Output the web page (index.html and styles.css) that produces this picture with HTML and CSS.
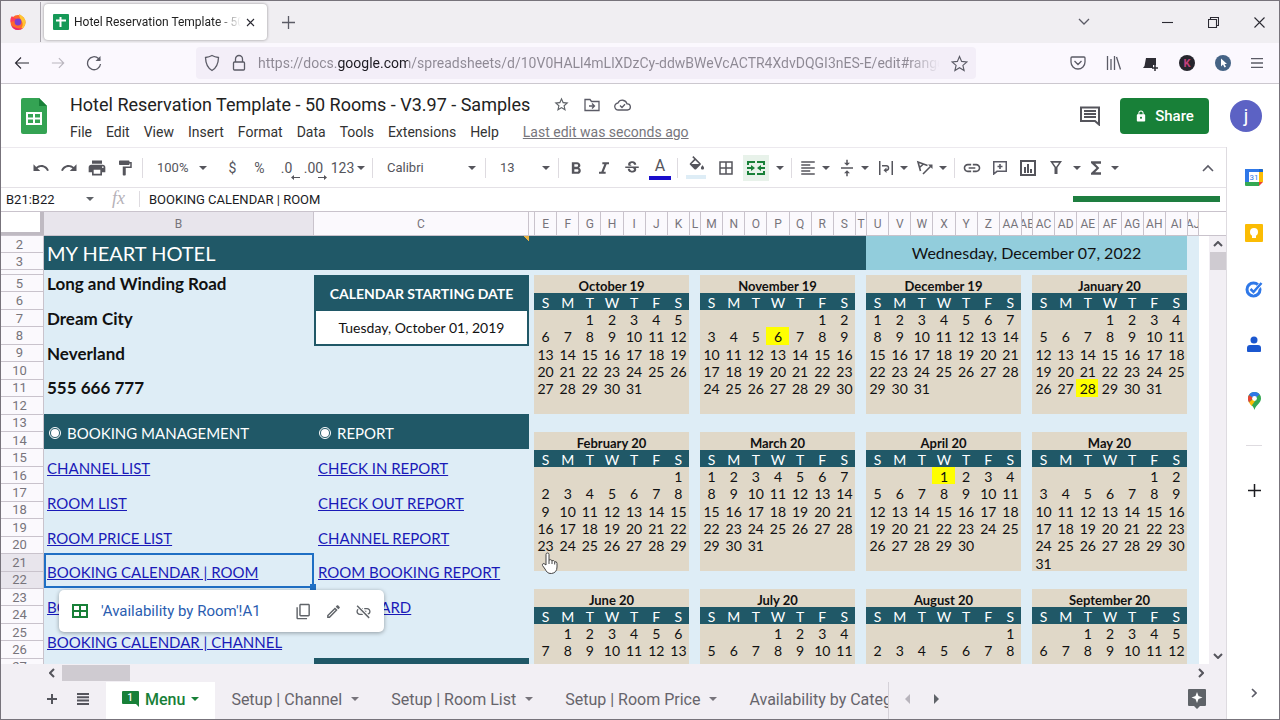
FILE: index.html
```html
<!DOCTYPE html>
<html lang="en">
<head>
    <meta charset="UTF-8">
    <title>Hotel Reservation Template - 50 Rooms - V3.97 - Samples</title>
    <link rel="stylesheet" href="styles.css">
</head>
<body>
<div class="tabstrip">
    <div class="pinned">
        <svg width="18" height="18" viewBox="0 0 18 18">
            <circle cx="9" cy="9.500" r="7.500" fill="#ff6a2b"/>
            <path d="M10 1c4 2 7 5 6.500 9-.5 4-3.500 7-7.500 7 4-1 5-4 4.500-7S10 5 10 1z" fill="#ffc533"/>
            <path d="M1.500 9C1 6 2 4 3 3c1 1.500 2 2 4 2L6 8z" fill="#ff3d5a"/>
            <path d="M2 12c1 3 4 5 7 5 2 0 4-1 5-2-4 1-9 0-12-3z" fill="#e8276f"/>
            <circle cx="9" cy="9" r="3.400" fill="#7a3fd0"/>
        </svg>
    </div>
    <div class="browser-tab">
        <svg width="16" height="16" viewBox="0 0 16 16">
            <rect width="16" height="16" rx="1" fill="#159957"/>
            <path d="M6.500 3h2v10h-2zM3 5.500h10v2H3z" fill="#fff"/>
        </svg>
        <span class="browser-tab-title">Hotel Reservation Template - 50 Rooms</span>
        <button class="plain" aria-label="Close tab">
            <svg width="9" height="9" viewBox="0 0 9 9" class="line dark"><path d="M1 1l7 7M8 1L1 8"/></svg>
        </button>
    </div>
    <button class="plain new-tab" aria-label="New tab">
        <svg width="13" height="13" viewBox="0 0 13 13" class="line"><path d="M6.500 0v13M0 6.500h13"/></svg>
    </button>
    <div class="window-buttons">
        <button class="plain all-tabs" aria-label="List all tabs">
            <svg width="12" height="8" viewBox="0 0 12 8" class="line"><path d="M1 1l5 5 5-5"/></svg>
        </button>
        <button class="plain" aria-label="Minimize">
            <svg width="11" height="11" viewBox="0 0 11 11" class="line dark"><path d="M0 5.500h11"/></svg>
        </button>
        <button class="plain" aria-label="Restore">
            <svg width="11" height="11" viewBox="0 0 11 11" class="line dark"><path d="M.5 2.500h8v8h-8zM2.500 2.500v-2h8v8h-2"/></svg>
        </button>
        <button class="plain" aria-label="Close">
            <svg width="11" height="11" viewBox="0 0 11 11" class="line dark"><path d="M.5.5l10 10M10.500.5l-10 10"/></svg>
        </button>
    </div>
</div>

<nav class="navbar">
    <div class="nav-buttons">
        <button class="plain" aria-label="Back">
            <svg width="16" height="16" viewBox="0 0 16 16" class="line dark"><path d="M15 8H1.500M7 2.500L1.500 8 7 13.500"/></svg>
        </button>
        <button class="plain" aria-label="Forward" disabled>
            <svg width="14" height="14" viewBox="0 0 16 16" class="line faint"><path d="M1 8h13.500M9 2.500L14.500 8 9 13.500"/></svg>
        </button>
        <button class="plain" aria-label="Reload">
            <svg width="16" height="16" viewBox="0 0 16 16" class="line"><path d="M14.500 9A6.500 6.500 0 1 1 12.500 3.500L14 5"/><path d="M14.500 1v5h-5z" fill="#5b5b66" stroke="none"/></svg>
        </button>
    </div>
    <div class="urlbar">
        <svg width="16" height="18" viewBox="0 0 16 18" class="line"><path d="M8 1.500c2.500 1.500 4.500 1.800 6.500 2-.2 6-2 10.500-6.500 13-4.500-2.500-6.300-7-6.500-13 2-.2 4-.5 6.500-2z"/></svg>
        <svg width="14" height="18" viewBox="0 0 14 18" class="line"><rect x="1.500" y="8" width="11" height="8" rx="1"/><path d="M3.500 8V5a3.500 3.500 0 0 1 7 0v3"/></svg>
        <input class="url" type="text" aria-label="Address" spellcheck="false"
               value="https://docs.google.com/spreadsheets/d/10V0HALl4mLlXDzCy-ddwBWeVcACTR4XdvDQGI3nES-E/edit#rangeid=1">
        <button class="plain" aria-label="Bookmark this page">
            <svg width="17" height="17" viewBox="0 0 24 24" class="line thick"><path d="M12 2l3 7 7.500.700-5.700 5 1.700 7.300L12 18l-6.500 4 1.700-7.300-5.700-5L9 9z"/></svg>
        </button>
    </div>
    <div class="extensions">
        <button class="plain" aria-label="Save to Pocket">
            <svg width="16" height="14" viewBox="0 0 16 14" class="line"><path d="M2 1h12q1 0 1 1v4a7 7 0 0 1-14 0V2q0-1 1-1zM4.500 5L8 8.500 11.500 5"/></svg>
        </button>
        <button class="plain" aria-label="Library">
            <svg width="16" height="14" viewBox="0 0 16 14" class="line"><path d="M1.500 0v14M5 3v11M8.500 0v14M10.500 1l4 12.500"/></svg>
        </button>
        <button class="plain" aria-label="Add folder">
            <svg width="17" height="15" viewBox="0 0 17 15"><path d="M4 2h10v7h-3v3H1l1.500-2z" fill="#2e2d35"/><path d="M13 9v6M10 12h6" stroke="#2e2d35" stroke-width="1.500"/></svg>
        </button>
        <button class="plain" aria-label="K extension">
            <svg width="16" height="16" viewBox="0 0 16 16"><circle cx="8" cy="8" r="8" fill="#26252d"/><text x="8" y="12" text-anchor="middle" class="ext-letter">K</text></svg>
        </button>
        <button class="plain" aria-label="Pointer extension">
            <svg width="16" height="16" viewBox="0 0 16 16"><circle cx="8" cy="8" r="8" fill="#456385"/><path d="M6 3.500v8l2-2 1.500 3 1.500-.7-1.500-2.800H12z" fill="#fff"/></svg>
        </button>
        <button class="plain" aria-label="Menu">
            <svg width="12" height="10" viewBox="0 0 12 10" class="line"><path d="M0 .5h12M0 5h12M0 9.500h12"/></svg>
        </button>
    </div>
</nav>

<header class="doc-header">
    <a href="#" class="doc-logo" aria-label="Sheets home">
        <svg width="26" height="36" viewBox="0 0 26 36">
            <path d="M2 0h16l8 8v26a2 2 0 0 1-2 2H2a2 2 0 0 1-2-2V2a2 2 0 0 1 2-2z" fill="#34a353"/>
            <path d="M18 0l8 8h-8z" fill="#188038"/>
            <path d="M5 14v13h16V14zm2 2h5v3.500H7zm7 0h5v3.500h-5zM7 21.500h5V25H7zm7 0h5V25h-5z" fill="#fff" fill-rule="evenodd"/>
        </svg>
    </a>
    <div class="doc-info">
        <div class="doc-title">
            <h1>Hotel Reservation Template - 50 Rooms - V3.97 - Samples</h1>
            <button class="plain" aria-label="Star">
                <svg width="17" height="17" viewBox="0 0 24 24" class="solid"><path d="M22 9.240l-7.190-.620L12 2 9.190 8.630 2 9.240l5.460 4.730L5.820 21 12 17.270 18.180 21l-1.630-7.030L22 9.240zM12 15.400l-3.760 2.270 1-4.280-3.320-2.880 4.380-.380L12 6.100l1.710 4.040 4.380.380-3.320 2.880 1 4.280L12 15.400z"/></svg>
            </button>
            <button class="plain" aria-label="Move">
                <svg width="16" height="14" viewBox="0 0 16 14" class="line"><path d="M1 1.500h5l1.500 2H15v9H1zM5 8h5M8 5.500L10.500 8 8 10.500"/></svg>
            </button>
            <button class="plain" aria-label="Document status">
                <svg width="17" height="13" viewBox="0 0 17 13" class="line"><path d="M4.500 12a3.500 3.500 0 0 1-.5-7 4.800 4.800 0 0 1 9 .8 3.100 3.100 0 0 1 .5 6.200zM6 7.500l2 2L11 6.300"/></svg>
            </button>
        </div>
        <div class="doc-menu">
            <button class="plain">File</button>
            <button class="plain">Edit</button>
            <button class="plain">View</button>
            <button class="plain">Insert</button>
            <button class="plain">Format</button>
            <button class="plain">Data</button>
            <button class="plain">Tools</button>
            <button class="plain">Extensions</button>
            <button class="plain">Help</button>
            <a href="#" class="last-edit">Last edit was seconds ago</a>
        </div>
    </div>
    <button class="plain" aria-label="Open comment history">
        <svg width="20" height="20" viewBox="0 0 20 20" class="line double"><path d="M1 1.500h18v17l-4-3.500H1z"/><path d="M4 5h12M4 8h12M4 11h12"/></svg>
    </button>
    <button class="share">
        <svg width="12" height="12" viewBox="3 0 18 23"><path d="M18 8h-1V6c0-2.760-2.240-5-5-5S7 3.240 7 6v2H6c-1.100 0-2 .9-2 2v10c0 1.100.9 2 2 2h12c1.100 0 2-.9 2-2V10c0-1.100-.9-2-2-2zm-6 9c-1.100 0-2-.9-2-2s.9-2 2-2 2 .9 2 2-.9 2-2 2zm3.100-9H8.900V6c0-1.710 1.390-3.100 3.100-3.100 1.710 0 3.100 1.390 3.100 3.100v2z" fill="#fff"/></svg>
        Share
    </button>
    <button class="avatar" aria-label="Account">j</button>
</header>

<div class="workspace">
    <main class="editor">
        <div class="toolbar">
            <button aria-label="Undo"><svg width="18" height="18" viewBox="0 0 24 24"><path d="M12.500 8c-2.650 0-5.050.990-6.900 2.600L2 7v9h9l-3.620-3.620c1.390-1.160 3.160-1.880 5.120-1.880 3.540 0 6.550 2.310 7.600 5.500l2.370-.780C21.080 11.030 17.150 8 12.500 8z"/></svg></button>
            <button aria-label="Redo"><svg width="18" height="18" viewBox="0 0 24 24"><path d="M18.400 10.600C16.550 8.990 14.150 8 11.500 8c-4.650 0-8.580 3.030-9.960 7.220L3.900 16c1.050-3.190 4.050-5.500 7.600-5.500 1.950 0 3.730.720 5.120 1.880L13 16h9V7l-3.600 3.600z"/></svg></button>
            <button aria-label="Print"><svg width="20" height="20" viewBox="0 0 24 24"><path d="M19 8H5c-1.660 0-3 1.340-3 3v6h4v4h12v-4h4v-6c0-1.660-1.340-3-3-3zm-3 11H8v-5h8v5zm3-7c-.550 0-1-.450-1-1s.450-1 1-1 1 .450 1 1-.450 1-1 1zm-1-9H6v4h12V3z"/></svg></button>
            <button aria-label="Paint format"><svg width="18" height="18" viewBox="0 0 24 24"><path d="M18 4V3c0-.550-.450-1-1-1H5c-.550 0-1 .450-1 1v4c0 .550.450 1 1 1h12c.550 0 1-.450 1-1V6h1v4H9v11c0 .550.450 1 1 1h2c.550 0 1-.450 1-1v-9h8V4h-3z"/></svg></button>
            <i class="sep"></i>
            <label class="picker zoom-picker">
                <select aria-label="Zoom"><option>100%</option></select>
                <svg width="8" height="4" viewBox="0 0 8 4"><path d="M0 0h8L4 4z"/></svg>
            </label>
            <button class="number">$</button>
            <button class="number">%</button>
            <button class="number decimal" aria-label="Decrease decimal places">.0<svg width="9" height="5" viewBox="0 0 9 5"><path d="M3 0v2h6v1H3v2L0 2.500z"/></svg></button>
            <button class="number decimal" aria-label="Increase decimal places">.00<svg width="9" height="5" viewBox="0 0 9 5"><path d="M6 0v2H0v1h6v2l3-2.500z"/></svg></button>
            <button class="more-formats">123<svg width="8" height="4" viewBox="0 0 8 4"><path d="M0 0h8L4 4z"/></svg></button>
            <i class="sep"></i>
            <label class="picker font-picker">
                <select aria-label="Font"><option>Calibri</option></select>
                <svg width="8" height="4" viewBox="0 0 8 4"><path d="M0 0h8L4 4z"/></svg>
            </label>
            <i class="sep"></i>
            <label class="picker size-picker">
                <select aria-label="Font size"><option>13</option></select>
                <svg width="8" height="4" viewBox="0 0 8 4"><path d="M0 0h8L4 4z"/></svg>
            </label>
            <i class="sep"></i>
            <button aria-label="Bold"><svg width="20" height="20" viewBox="0 -1 24 24"><path d="M15.600 10.790c.970-.670 1.650-1.770 1.650-2.790 0-2.260-1.750-4-4-4H7v14h7.040c2.090 0 3.710-1.700 3.710-3.790 0-1.520-.860-2.820-2.150-3.420zM10 6.500h3c.830 0 1.500.670 1.500 1.500s-.670 1.500-1.500 1.500h-3v-3zm3.500 9H10v-3h3.500c.830 0 1.500.670 1.500 1.500s-.670 1.500-1.500 1.500z"/></svg></button>
            <button aria-label="Italic"><svg width="20" height="20" viewBox="0 -1 24 24"><path d="M10 4v2.500h2.400l-3.600 9H6V18h8v-2.500h-2.400l3.600-9H18V4z"/></svg></button>
            <button aria-label="Strikethrough"><svg width="18" height="18" viewBox="0 0 24 24"><path d="M7.240 8.750c-.260-.480-.390-1.030-.390-1.670 0-.610.130-1.160.4-1.670.260-.5.630-.930 1.110-1.290.480-.350 1.050-.630 1.700-.830.660-.190 1.390-.290 2.180-.290.810 0 1.540.110 2.210.340.660.220 1.230.540 1.690.940.470.4.830.880 1.080 1.430s.380 1.150.380 1.810h-3.010c0-.310-.050-.590-.150-.850-.090-.270-.240-.490-.440-.680-.2-.190-.450-.330-.750-.440-.3-.1-.660-.160-1.060-.160-.390 0-.740.040-1.030.130s-.530.210-.720.360c-.190.160-.340.340-.440.550-.1.210-.150.430-.150.660 0 .480.250.880.740 1.210.380.250.770.480 1.410.7H7.390c-.050-.080-.110-.170-.150-.250zM21 12v-2H3v2h9.620c.180.070.4.140.550.2.370.170.660.340.870.510s.350.360.430.570c.070.2.110.430.110.690 0 .230-.050.450-.140.660-.090.2-.230.380-.420.530-.190.150-.420.260-.710.350-.290.080-.630.130-1.010.130-.430 0-.830-.040-1.180-.130s-.660-.230-.910-.420c-.250-.190-.450-.440-.590-.750s-.250-.760-.250-1.210H6.400c0 .550.080 1.130.240 1.580s.370.850.650 1.210c.280.350.6.660.980.920.370.260.780.480 1.220.650.440.170.9.3 1.380.390.480.080.960.130 1.440.130.8 0 1.530-.090 2.180-.280s1.210-.450 1.670-.790c.460-.340.820-.770 1.070-1.270s.380-1.070.380-1.710c0-.6-.1-1.140-.310-1.610-.050-.110-.110-.230-.170-.330H21z"/></svg></button>
            <button class="text-color" aria-label="Text color">A</button>
            <i class="sep"></i>
            <button class="roomy fill-color" aria-label="Fill color"><svg width="17" height="16" viewBox="1 0 21 20"><path d="M16.560 8.940L7.620 0 6.210 1.410l2.380 2.380-5.150 5.150c-.590.590-.590 1.540 0 2.120l5.500 5.500c.290.290.680.440 1.060.440s.770-.150 1.060-.440l5.500-5.500c.590-.580.590-1.530 0-2.120zM5.210 10L10 5.210 14.790 10H5.210zM19 11.500s-2 2.170-2 3.500c0 1.100.9 2 2 2s2-.9 2-2c0-1.330-2-3.500-2-3.500z"/></svg></button>
            <button class="roomy" aria-label="Borders"><svg width="18" height="18" viewBox="0 0 24 24"><path d="M3 3v18h18V3H3zm8 16H5v-6h6v6zm0-8H5V5h6v6zm8 8h-6v-6h6v6zm0-8h-6V5h6v6z"/></svg></button>
            <button class="roomy" aria-label="Merge cells"><span class="pressed"><svg width="18" height="16" viewBox="0 0 18 16" class="green"><path d="M0 1h8v2H2v2H0zM10 1h8v4h-2V3h-6zM0 11h2v2h6v2H0zM16 11h2v4h-8v-2h6zM0 7h4V5l4 3-4 3V9H0zM18 7h-4V5l-4 3 4 3V9h4z"/></svg></span></button>
            <button class="caret merge-type" aria-label="Merge type"><svg width="8" height="4" viewBox="0 0 8 4"><path d="M0 0h8L4 4z"/></svg></button>
            <i class="sep"></i>
            <button class="menu-btn" aria-label="Horizontal align"><svg width="18" height="18" viewBox="0 0 24 24"><path d="M15 15H3v2h12v-2zm0-8H3v2h12V7zM3 13h18v-2H3v2zm0 8h18v-2H3v2zM3 3v2h18V3H3z"/></svg><svg width="8" height="4" viewBox="0 0 8 4"><path d="M0 0h8L4 4z"/></svg></button>
            <button class="menu-btn" aria-label="Vertical align"><svg width="18" height="18" viewBox="0 0 24 24"><path d="M8 19h3v4h2v-4h3l-4-4-4 4zm8-14h-3V1h-2v4H8l4 4 4-4zM4 11v2h16v-2H4z"/></svg><svg width="8" height="4" viewBox="0 0 8 4"><path d="M0 0h8L4 4z"/></svg></button>
            <button class="menu-btn" aria-label="Text wrapping"><svg width="18" height="18" viewBox="0 0 18 18"><path d="M2 2h1.500v14H2zM14.500 2H16v14h-1.500zM5 6h4a3 3 0 0 1 .5 6v2L6.500 11.200l3-2.700v2A1.500 1.500 0 0 0 9 7.500H5z"/></svg><svg width="8" height="4" viewBox="0 0 8 4"><path d="M0 0h8L4 4z"/></svg></button>
            <button class="menu-btn" aria-label="Text rotation"><svg width="18" height="18" viewBox="0 0 18 18" fill="none" stroke="#55555c" stroke-width="1.600"><path d="M4.500 12L2 3l9.500 3.500M3.500 8.500L7.500 5M7 15l8-8"/><path d="M12 5.500h4.500V10z" fill="#55555c" stroke="none"/></svg><svg width="8" height="4" viewBox="0 0 8 4"><path d="M0 0h8L4 4z"/></svg></button>
            <i class="sep"></i>
            <button aria-label="Insert link"><svg width="20" height="20" viewBox="0 0 24 24"><path d="M3.900 12c0-1.710 1.390-3.100 3.100-3.100h4V7H7c-2.760 0-5 2.240-5 5s2.240 5 5 5h4v-1.900H7c-1.710 0-3.100-1.390-3.100-3.100zM8 13h8v-2H8v2zm9-6h-4v1.900h4c1.710 0 3.100 1.390 3.100 3.100s-1.390 3.100-3.100 3.100h-4V17h4c2.760 0 5-2.240 5-5s-2.240-5-5-5z"/></svg></button>
            <button aria-label="Insert comment"><svg width="14" height="14" viewBox="0 0 14 14" class="line thick"><path d="M.7.700h12.600v9.600H4L.7 13zM7 3v5M4.500 5.500h5"/></svg></button>
            <button aria-label="Insert chart"><svg width="16" height="16" viewBox="0 0 16 16"><path d="M0 0h16v16H0zM2 2v12h12V2zM4 7h2v6H4zM7 4h2v9H7zM10 9h2v4h-2z" fill-rule="evenodd"/></svg></button>
            <button aria-label="Create a filter"><svg width="12" height="13" viewBox="0 0 12 13"><path d="M0 0h12L7.500 6.500V13h-3V6.500zM3 1.800L6 6l3-4.200z" fill-rule="evenodd"/></svg></button>
            <button class="caret" aria-label="Filter views"><svg width="8" height="4" viewBox="0 0 8 4"><path d="M0 0h8L4 4z"/></svg></button>
            <button class="functions" aria-label="Functions"><svg width="20" height="20" viewBox="0 0 24 24"><path d="M18 4H6v2l6.500 6L6 18v2h12v-3h-7l5-5-5-5h7z"/></svg></button>
            <button class="caret" aria-label="More functions"><svg width="8" height="4" viewBox="0 0 8 4"><path d="M0 0h8L4 4z"/></svg></button>
            <button class="hide-menus" aria-label="Hide the menus"><svg width="12" height="8" viewBox="0 0 12 8" class="line thick"><path d="M1 7l5-5 5 5"/></svg></button>
        </div>

        <div class="formula-bar">
            <input class="name-box" type="text" aria-label="Name box" value="B21:B22">
            <svg width="8" height="4" viewBox="0 0 8 4" class="solid"><path d="M0 0h8L4 4z"/></svg>
            <span class="fx">fx</span>
            <input class="formula" type="text" aria-label="Formula" value="BOOKING CALENDAR | ROOM">
            <span class="progress"></span>
        </div>

        <div class="sheet">
            <div class="column-headers">
                <span class="corner"></span>
                <span class="col col-b">B</span>
                <span class="col col-c">C</span>
                <span class="col col-d"></span>
                <div class="month-columns" id="month-columns"></div>
            </div>

            <div class="sheet-body">
                <div class="row-headers" id="row-headers">
                    <span class="row-tall">2</span>
                    <span class="row-tall">3</span>
                    <span class="row-thin"></span>
                </div>
                <div class="cells">
                    <div class="banner">
                        <h2>MY HEART HOTEL</h2>
                        <div class="today">Wednesday, December 07, 2022</div>
                    </div>
                    <div class="content">
                        <div class="left">
                            <div class="top">
                                <div class="address">
                                    <span>Long and Winding Road</span>
                                    <span>Dream City</span>
                                    <span>Neverland</span>
                                    <span>555 666 777</span>
                                </div>
                                <div class="start-date">
                                    <b>CALENDAR STARTING DATE</b>
                                    <span>Tuesday, October 01, 2019</span>
                                </div>
                            </div>
                            <div class="section-heads">
                                <h3><i class="dot"></i>BOOKING MANAGEMENT</h3>
                                <h3><i class="dot"></i>REPORT</h3>
                            </div>
                            <div class="links">
                                <div class="link-cell"><a href="#">CHANNEL LIST</a></div>
                                <div class="link-cell"><a href="#">CHECK IN REPORT</a></div>
                                <div class="link-cell"><a href="#">ROOM LIST</a></div>
                                <div class="link-cell"><a href="#">CHECK OUT REPORT</a></div>
                                <div class="link-cell"><a href="#">ROOM PRICE LIST</a></div>
                                <div class="link-cell"><a href="#">CHANNEL REPORT</a></div>
                                <div class="link-cell selected">
                                    <a href="#">BOOKING CALENDAR | ROOM</a>
                                    <div class="link-card">
                                        <svg width="16" height="14" viewBox="0 0 16 14" class="green"><path d="M0 0h16v14H0zM2 2v4h5V2zM9 2v4h5V2zM2 8v4h5V8zM9 8v4h5V8z" fill-rule="evenodd"/></svg>
                                        <a href="#">'Availability by Room'!A1</a>
                                        <button class="plain" aria-label="Copy link"><svg width="17" height="17" viewBox="0 0 24 24" class="solid"><path d="M19 1H8c-1.100 0-2 .9-2 2v14c0 1.100.9 2 2 2h11c1.100 0 2-.9 2-2V3c0-1.100-.9-2-2-2zm0 16H8V3h11v14zM2 6v15c0 1.100.9 2 2 2h13v-2H4V6z"/></svg></button>
                                        <button class="plain" aria-label="Edit link"><svg width="17" height="17" viewBox="0 0 24 24" class="solid"><path d="M14.060 9.020l.920.920L5.920 19H5v-.920l9.060-9.060M17.660 3c-.250 0-.510.1-.7.290l-1.830 1.830 3.750 3.750 1.830-1.830c.390-.390.390-1.020 0-1.410l-2.340-2.340c-.2-.2-.450-.290-.710-.290zm-3.600 3.190L3 17.250V21h3.750L17.810 9.940l-3.750-3.750z"/></svg></button>
                                        <button class="plain" aria-label="Remove link"><svg width="17" height="17" viewBox="0 0 24 24" class="solid"><path d="M3.900 12c0-1.710 1.390-3.100 3.100-3.100h4V7H7c-2.760 0-5 2.240-5 5s2.240 5 5 5h4v-1.900H7c-1.710 0-3.100-1.390-3.100-3.100zM8 13h8v-2H8v2zm9-6h-4v1.900h4c1.710 0 3.100 1.390 3.100 3.100s-1.390 3.100-3.100 3.100h-4V17h4c2.760 0 5-2.240 5-5s-2.240-5-5-5z"/><path d="M3 4l17 17" stroke="#fff" stroke-width="5"/><path d="M3 4l17 17" stroke="#5f6368" stroke-width="2"/></svg></button>
                                    </div>
                                </div>
                                <div class="link-cell"><a href="#">ROOM BOOKING REPORT</a></div>
                                <div class="link-cell"><a href="#">BOOKING CALENDAR | PRICE</a></div>
                                <div class="link-cell"><a href="#">DASHBOARD</a></div>
                                <div class="link-cell"><a href="#">BOOKING CALENDAR | CHANNEL</a></div>
                            </div>
                            <div class="next-section"></div>
                        </div>
                        <div class="months" id="months"></div>
                    </div>
                </div>
                <div class="off-grid"></div>
                <div class="scroll-y">
                    <svg width="10" height="6" viewBox="0 0 10 6" class="line double"><path d="M1 5l4-4 4 4"/></svg>
                    <span class="thumb"></span>
                    <svg width="10" height="6" viewBox="0 0 10 6" class="line double"><path d="M1 1l4 4 4-4"/></svg>
                </div>
            </div>
        </div>

        <div class="scroll-x">
            <svg width="6" height="10" viewBox="0 0 6 10" class="line double"><path d="M5 1L1 5l4 4"/></svg>
            <span class="thumb"></span>
            <svg width="6" height="10" viewBox="0 0 6 10" class="line double"><path d="M1 1l4 4-4 4"/></svg>
        </div>

        <footer class="sheet-tabs">
            <button class="plain add-sheet" aria-label="Add sheet"><svg width="10" height="10" viewBox="0 0 10 10" class="line double"><path d="M5 0v10M0 5h10"/></svg></button>
            <button class="plain all-sheets" aria-label="All sheets"><svg width="12" height="12" viewBox="0 0 12 12" class="line double"><path d="M0 1h12M0 4.300h12M0 7.600h12M0 11h12"/></svg></button>
            <div class="tab-list">
                <button class="sheet-tab active">
                    <svg width="17" height="16" viewBox="0 0 17 16"><path d="M1 0h15q1 0 1 1v15l-3-3H1q-1 0-1-1V1q0-1 1-1z" fill="#188038"/><text x="8" y="10" text-anchor="middle" class="comment-count">1</text></svg>
                    Menu
                    <svg width="8" height="4" viewBox="0 0 8 4"><path d="M0 0h8L4 4z"/></svg>
                </button>
                <button class="sheet-tab">Setup | Channel<svg width="8" height="4" viewBox="0 0 8 4"><path d="M0 0h8L4 4z"/></svg></button>
                <button class="sheet-tab">Setup | Room List<svg width="8" height="4" viewBox="0 0 8 4"><path d="M0 0h8L4 4z"/></svg></button>
                <button class="sheet-tab">Setup | Room Price<svg width="8" height="4" viewBox="0 0 8 4"><path d="M0 0h8L4 4z"/></svg></button>
                <button class="sheet-tab">Availability by Category</button>
            </div>
            <div class="tab-scroll">
                <button class="plain" aria-label="Scroll left" disabled><svg width="5" height="10" viewBox="0 0 5 10"><path d="M5 0v10L0 5z" fill="#b8b4bc"/></svg></button>
                <button class="plain" aria-label="Scroll right"><svg width="5" height="10" viewBox="0 0 5 10"><path d="M0 0v10l5-5z" fill="#5f6368"/></svg></button>
            </div>
            <button class="plain explore" aria-label="Explore">
                <svg width="18" height="20" viewBox="0 0 18 20"><path d="M1 0h16q1 0 1 1v15q0 1-1 1h-5l-3 3-3-3H1q-1 0-1-1V1q0-1 1-1z" fill="#5f6368"/><path d="M9 3l1.500 4L14.500 8.500l-4 1.500L9 14l-1.500-4-4-1.500 4-1.500z" fill="#fff"/></svg>
            </button>
        </footer>
    </main>

    <aside class="side-panel">
        <button class="plain" aria-label="Calendar">
            <svg width="18" height="18" viewBox="0 0 18 18"><path d="M0 1h14v3H4v10H0z" fill="#2f78e8"/><path d="M14 1h4v13h-4z" fill="#fbbc04"/><path d="M14 1h3q1 0 1 1v2h-4z" fill="#1967d2"/><path d="M0 14h14v4H1q-1 0-1-1z" fill="#34a853"/><path d="M14 18v-4h4z" fill="#ea4335"/><path d="M4 4h10v10H4z" fill="#fff"/><text x="9" y="12" text-anchor="middle" class="cal-day">31</text></svg>
        </button>
        <button class="plain" aria-label="Keep">
            <svg width="18" height="18" viewBox="0 0 18 18"><rect width="18" height="18" rx="1" fill="#fbbc04"/><circle cx="9" cy="8" r="4" fill="#fff"/><path d="M7 11h4v3H7z" fill="#fff"/></svg>
        </button>
        <button class="plain" aria-label="Tasks">
            <svg width="18" height="18" viewBox="0 0 18 18" fill="none"><circle cx="8.500" cy="9.500" r="6.500" stroke="#2f78e8" stroke-width="3"/><path d="M5.500 9l3 3L17 3" stroke="#fff" stroke-width="4"/><path d="M5.500 9l3 3L16.500 3" stroke="#2f78e8" stroke-width="2.500"/></svg>
        </button>
        <button class="plain" aria-label="Contacts">
            <svg width="14" height="18" viewBox="0 0 14 18" fill="#1b57cf"><circle cx="7" cy="4" r="3.500"/><path d="M3 9h8q3 0 3 3v3q0 1-1 1H1q-1 0-1-1v-3q0-3 3-3z"/></svg>
        </button>
        <button class="plain" aria-label="Maps">
            <svg width="13" height="18" viewBox="0 0 13 18"><path d="M6.500 0a6.400 6.400 0 0 1 6.500 6.500c0 4.500-5 6-6.500 11.500C5 12.500 0 11 0 6.500A6.400 6.400 0 0 1 6.500 0z" fill="#34a853"/><path d="M1 3a6.400 6.400 0 0 1 10.500-.5L6.500 7z" fill="#2f78e8"/><path d="M1 3l4 3-4 4.500C-.5 8-.3 5 1 3z" fill="#ea4335"/><path d="M1 10.500L5 7l2 2-3.500 5z" fill="#fbbc04"/><circle cx="6.500" cy="6.500" r="2.400" fill="#fff"/></svg>
        </button>
        <hr>
        <button class="plain" aria-label="Get add-ons">
            <svg width="13" height="13" viewBox="0 0 13 13"><path d="M6.500 0v13M0 6.500h13" stroke="#1b1b1f" stroke-width="1.500"/></svg>
        </button>
        <button class="plain hide-panel" aria-label="Hide side panel">
            <svg width="6" height="10" viewBox="0 0 6 10" class="line thick"><path d="M1 1l4 4-4 4"/></svg>
        </button>
    </aside>
</div>

<svg class="pointer" width="18" height="23" viewBox="0 0 18 23">
    <path d="M5 13V2.500a1.500 1.500 0 0 1 3 0V8q2-1 3 .7 2-.8 2.800 1 2.200-.4 2.200 1.800V15c0 4-2 6-5.500 6.500-4 .3-5-2-6.500-4.500L1.500 13.500C.7 11.500 3 11 4 12.300z" fill="#fff" stroke="#444" stroke-width="1"/>
    <path d="M8 8v4M11 9v3M13.700 10v2.500" stroke="#444" stroke-width="1"/>
</svg>

<script src="script.js"></script>
</body>
</html>
```
FILE: styles.css
```css
:root {
  --teal: #205867;
  --sky: #deedf6;
  --sand: #e0d8c8;
  --icon: #5f6368;
  --header-line: #c9c3cc;
  --sheet-font: Lato, sans-serif;
}

* {
  box-sizing: border-box;
}

body {
  display: flex;
  flex-direction: column;
  height: 100vh;
  margin: 0;
  position: relative;
  overflow: hidden;
  border: 1px solid #77737b;
  background: white;
  color: #222;
  font-family: Roboto, sans-serif;
  font-size: 14px;
}

h1, h2, h3 {
  margin: 0;
  font-weight: normal;
}

button, input, select {
  font: inherit;
  color: inherit;
  border: 0;
  padding: 0;
  background: none;
}

button {
  display: flex;
  align-items: center;
  justify-content: center;
  cursor: pointer;
  white-space: nowrap;
}

svg {
  flex: none;
}

.line {
  fill: none;
  stroke: #5b5b66;
  stroke-width: 1.3;
}
.line.dark {
  stroke: #2b2a33;
  stroke-width: 1.1;
}
.line.faint {
  stroke: #b9b5be;
}
.line.thick {
  stroke-width: 1.6;
}
.line.double {
  stroke: #55555c;
  stroke-width: 2;
}
.solid {
  fill: var(--icon);
}

/* browser chrome */
.tabstrip {
  display: flex;
  align-items: center;
  flex: none;
  height: 42px;
  background: #f0eef2;
}

.pinned {
  display: flex;
  align-items: center;
  justify-content: center;
  width: 40px;
  padding-right: 6px;
  height: 40px;
  border-right: 1px solid #aaa6ae;
}

.browser-tab {
  display: flex;
  align-items: center;
  width: 223px;
  height: 36px;
  margin-left: 3px;
  padding: 0 12px 0 9px;
  background: white;
  border-radius: 4px;
  box-shadow: 0 0 3px rgba(0, 0, 0, 0.4);
}

.browser-tab-title {
  flex: 1;
  margin: 0 5px;
  overflow: hidden;
  white-space: nowrap;
  font-size: 12px;
  -webkit-mask-image: linear-gradient(90deg, black 85%, transparent);
  mask-image: linear-gradient(90deg, black 85%, transparent);
}

.new-tab {
  margin-left: 15px;
}

.window-buttons {
  display: flex;
  gap: 35px;
  margin-left: auto;
  padding-right: 14px;
}

.all-tabs {
  margin-right: 37px;
}

.navbar {
  display: flex;
  align-items: center;
  flex: none;
  height: 41px;
  background: #fbf8fe;
  border-bottom: 1px solid #ccc8cf;
}

.nav-buttons {
  display: flex;
  gap: 21px;
  width: 195px;
  padding-left: 13px;
}

.urlbar {
  display: flex;
  align-items: center;
  gap: 12px;
  flex: 1;
  max-width: 780px;
  height: 32px;
  padding: 0 8px 0 8px;
  background: #f3eef8;
  border-radius: 4px;
}

.url {
  flex: 1;
  min-width: 0;
  font-size: 14px;
  color: transparent;
  background: linear-gradient(90deg, #8d8893 0 79px, #1d1b22 79px 150px, #8d8893 150px 650px, transparent 682px);
  -webkit-background-clip: text;
  background-clip: text;
}

.extensions {
  display: flex;
  align-items: center;
  gap: 20px;
  margin-left: auto;
  padding-right: 16px;
}

.ext-letter {
  font-size: 11px;
  font-weight: bold;
  fill: #c2407c;
}

/* document header */
.doc-header {
  display: flex;
  align-items: center;
  flex: none;
  height: 63px;
  padding: 0 17px 0 20px;
}

.doc-logo {
  display: flex;
}

.doc-info {
  flex: 1;
  padding: 2px 0 0 23px;
}

.doc-title {
  display: flex;
  align-items: center;
  gap: 14px;
  height: 30px;
}

.doc-title h1 {
  margin-right: 9px;
  font-size: 18px;
  white-space: nowrap;
}

.doc-menu {
  display: flex;
  align-items: center;
  gap: 14px;
  height: 24px;
  color: #333;
}

.last-edit {
  margin-left: 10px;
  color: #77767c;
}

.share {
  gap: 8px;
  width: 89px;
  height: 36px;
  margin: 0 21px 0 20px;
  border-radius: 4px;
  background: #188038;
  color: white;
  font-size: 15px;
  font-weight: 500;
}

.avatar {
  width: 32px;
  height: 32px;
  border-radius: 50%;
  background: #5c62c4;
  color: white;
  font-size: 19px;
}

/* editor */
.workspace {
  display: flex;
  flex: 1;
  min-height: 0;
}

.editor {
  display: flex;
  flex-direction: column;
  flex: 1;
  min-width: 0;
  border-top: 1px solid #ece9ee;
}

.toolbar {
  display: flex;
  align-items: center;
  flex: none;
  height: 40px;
  padding: 0 10px 0 26px;
  border-bottom: 1px solid #e4e1e6;
  color: #55555c;
  fill: #55555c;
  font-size: 13px;
}

.toolbar button {
  width: 28px;
  height: 28px;
  flex: none;
}
.toolbar .number {
  width: 27px;
  font-size: 14px;
}
.toolbar .decimal {
  flex-direction: column;
  align-items: center;
  padding-top: 6px;
  line-height: 14px;
}
.toolbar .decimal svg {
  align-self: flex-end;
}
.toolbar .more-formats {
  gap: 3px;
  width: 42px;
  font-size: 14px;
}
.toolbar .roomy {
  width: 30px;
}
.toolbar .caret {
  width: 14px;
}
.toolbar .merge-type {
  width: 17px;
}
.toolbar .menu-btn {
  gap: 5px;
  width: 39px;
}
.toolbar .functions {
  width: 24px;
}
.toolbar .hide-menus {
  width: 16px;
  margin-left: auto;
}

.toolbar .text-color {
  align-items: flex-start;
  width: 22px;
  height: 24px;
  margin: 0 3px;
  border-bottom: 4px solid #1a0dcc;
  font-size: 16px;
}

.toolbar .fill-color {
  align-items: flex-start;
  width: 20px;
  height: 23px;
  margin: 0 5px;
  border-bottom: 4px solid var(--sky);
}

.pressed {
  display: flex;
  align-items: center;
  justify-content: center;
  width: 26px;
  height: 26px;
  background: #e8f2ea;
}

.green {
  fill: #188038;
}

.sep {
  flex: none;
  width: 1px;
  height: 20px;
  margin: 0 3px;
  background: #dedbe0;
}

.picker {
  display: flex;
  align-items: center;
  flex: none;
  padding: 0 12px 0 11px;
}
.picker select {
  flex: 1;
  appearance: none;
}
.zoom-picker {
  width: 73px;
}
.font-picker {
  width: 106px;
  padding-right: 6px;
}
.size-picker {
  width: 66px;
  padding-right: 5px;
}

.formula-bar {
  display: flex;
  align-items: center;
  flex: none;
  height: 23px;
  padding: 0 6px 1px 5px;
  font-size: 13px;
  color: #1b1b1f;
}

.name-box {
  width: 80px;
}

.fx {
  width: 28px;
  height: 16px;
  margin: 0 9px 0 18px;
  border-right: 1px solid #dedbe0;
  color: #b5b1b8;
  font: italic 18px/14px "Liberation Serif", serif;
}

.formula {
  flex: 1;
}

.progress {
  width: 147px;
  height: 6px;
  background: #1e7e40;
}

.sheet {
  display: flex;
  flex-direction: column;
  flex: 1;
  min-height: 0;
}

.column-headers {
  display: flex;
  flex: none;
  height: 25px;
  border-top: 1px solid var(--header-line);
  border-bottom: 1px solid var(--header-line);
  color: #77747b;
  font-size: 12px;
}

.corner {
  width: 43px;
  border-right: 4px solid #bfbac2;
  border-bottom: 3px solid #bfbac2;
}

.col {
  display: flex;
  align-items: center;
  justify-content: center;
  overflow: hidden;
  border-right: 1px solid var(--header-line);
  background: #fbf9fd;
}
.col-b {
  width: 270px;
  background: #e8e5ec;
}
.col-c {
  width: 215px;
}
.col-d {
  width: 6px;
}

.month-columns {
  display: flex;
}

.month-group {
  display: grid;
  grid-template-columns: repeat(7, 1fr);
  width: 155px;
}

.col-gap {
  width: 11px;
}

.sheet-body {
  display: flex;
  flex: 1;
  min-height: 0;
  overflow: hidden;
}

.row-headers {
  flex: none;
  width: 43px;
  height: 0;
  color: #77747b;
  font-size: 13px;
}
.row-headers span {
  display: flex;
  align-items: center;
  justify-content: center;
  padding-right: 5px;
  border-right: 1px solid var(--header-line);
  border-bottom: 1px solid var(--header-line);
  background: #fbf9fd;
}
.row-headers .row-tall {
  height: 17px;
}
.row-headers .row-thin {
  height: 5px;
}
.row-headers .active {
  background: #e8e5ec;
}

.row-block {
  display: grid;
  grid-template-rows: repeat(9, 1fr);
  height: 157px;
}

.cells {
  flex: none;
  width: 1155px;
  background: var(--sky);
  font-family: var(--sheet-font);
  color: #111;
}

.banner {
  display: flex;
  height: 34px;
  margin-right: 12px;
}

.banner h2 {
  flex: 1;
  padding-left: 3px;
  background: linear-gradient(225deg, #e8b040 4px, transparent 4px) 0 0 / 485px 100% no-repeat var(--teal);
  color: white;
  font-size: 20px;
  line-height: 34px;
}

.today {
  width: 321px;
  background: #92cddc;
  font-size: 16px;
  line-height: 34px;
  text-align: center;
}

.content {
  display: flex;
  gap: 5px;
  padding-top: 5px;
}

.left {
  width: 485px;
  font-size: 15px;
}

.top, .section-heads {
  display: grid;
  grid-template-columns: 270px 1fr;
}

.address {
  display: grid;
  grid-template-rows: repeat(4, 1fr);
  height: 139px;
  padding-left: 3px;
  font-size: 17px;
  font-weight: bold;
  line-height: 17px;
}

.start-date {
  height: 71px;
  border: 2px solid var(--teal);
  background: white;
  text-align: center;
  font-size: 14px;
}
.start-date b {
  display: block;
  background: var(--teal);
  color: white;
  line-height: 34px;
}
.start-date span {
  line-height: 34px;
}

.section-heads {
  height: 35px;
  background: var(--teal);
  color: white;
}

.section-heads h3 {
  display: flex;
  align-items: center;
  gap: 6px;
  padding: 2px 0 0 5px;
  font-size: 15px;
}

.dot {
  width: 12px;
  height: 12px;
  border: 1px solid white;
  border-radius: 50%;
  background: white;
  background-clip: content-box;
  padding: 1px;
}

.links {
  display: grid;
  grid-template-columns: 270px 1fr;
  grid-template-rows: repeat(6, 1fr);
  height: 209px;
}

.link-cell {
  display: flex;
  align-items: center;
  padding: 3px 0 0 4px;
  white-space: nowrap;
}

.link-cell:nth-child(odd) {
  padding-left: 3px;
}

.link-cell > a {
  color: #1a1ab8;
}

.link-cell.selected {
  position: relative;
  padding: 3px 0 0 1px;
  border: 2px solid #1f6fc4;
}
.selected::after {
  content: "";
  position: absolute;
  right: -4px;
  bottom: -4px;
  width: 6px;
  height: 6px;
  background: #1f6fc4;
}

.link-card {
  position: absolute;
  z-index: 2;
  top: 35px;
  left: 13px;
  display: flex;
  align-items: center;
  width: 325px;
  height: 42px;
  padding: 0 12px 0 13px;
  gap: 13px;
  border-radius: 5px;
  background: white;
  box-shadow: 0 1px 4px rgba(0, 0, 0, 0.35);
  font-family: Roboto, sans-serif;
}

.link-card a {
  flex: 1;
  color: #2a5db0;
  text-decoration: none;
}

.next-section {
  height: 20px;
  margin-left: 270px;
  background: var(--teal);
}

.months {
  display: grid;
  grid-template-columns: repeat(4, 155px);
  gap: 18px 11px;
  align-content: start;
}

/* the caption's 18px come on top of the table's height */
.month {
  width: 155px;
  height: 121px;
  border-spacing: 0;
  table-layout: fixed;
  background: var(--sand);
  font-size: 14px;
  line-height: 14px;
  text-align: center;
}
.month caption {
  height: 18px;
  padding-top: 4px;
  background: var(--sand);
  font-weight: bold;
  font-size: 13px;
}
.month th, .month td {
  height: 17px;
  padding: 3px 0 0 1px;
}
.month th {
  background: var(--teal);
  color: white;
  font-weight: normal;
}
.month .booked {
  background: #ffff00;
}

.off-grid {
  flex: 1;
  background: white;
}

.scroll-y {
  display: flex;
  flex-direction: column;
  align-items: center;
  flex: none;
  width: 17px;
  padding: 5px 0;
  background: #f2eff4;
}
.scroll-y .thumb {
  width: 16px;
  height: 18px;
  margin: 5px 0 auto;
  background: #cfcbd1;
}

.scroll-x {
  display: flex;
  align-items: center;
  flex: none;
  height: 18px;
  padding: 0 22px 0 48px;
  background: #f2eff4;
}
.scroll-x .thumb {
  width: 68px;
  height: 16px;
  margin: 0 auto 0 7px;
  background: #cfcbd1;
}

.sheet-tabs {
  display: flex;
  align-items: stretch;
  flex: none;
  height: 37px;
  background: #f2eff4;
}
.sheet-tabs button {
  padding-bottom: 3px;
}

.add-sheet {
  margin-left: 46px;
}
.all-sheets {
  margin: 0 17px 0 20px;
}

.tab-list {
  display: flex;
  width: 783px;
  overflow: hidden;
  border-right: 1px solid #d5d1d8;
}

.tab-list .sheet-tab {
  gap: 9px;
  flex: none;
  padding: 0 16px 3px;
  color: #66646b;
  fill: #77747b;
  font-size: 16px;
}
.tab-list .active {
  gap: 6px;
  background: white;
  color: #188038;
  fill: #188038;
  font-weight: 500;
}

.comment-count {
  font-size: 10px;
  fill: white;
}

.tab-scroll {
  display: flex;
  gap: 24px;
  padding: 0 16px;
}

.explore {
  margin: 0 20px 0 auto;
}

/* side panel */
.side-panel {
  display: flex;
  flex-direction: column;
  align-items: center;
  gap: 38px;
  flex: none;
  width: 53px;
  padding: 21px 0 21px 2px;
  border-left: 1px solid #dedbe0;
}

.side-panel hr {
  width: 16px;
  margin: -3px 0 0;
  border: 0;
  border-top: 1px solid #dedbe0;
}

.hide-panel {
  margin-top: auto;
}

.cal-day {
  font-size: 8px;
  fill: #2f78e8;
}

.pointer {
  position: absolute;
  left: 540px;
  top: 551px;
}
```
FILE: script.js
```js
(function () {
  const monthNames = ['January', 'February', 'March', 'April', 'May', 'June', 'July',
    'August', 'September', 'October', 'November', 'December']
  const booked = ['2019-11-6', '2020-1-28', '2020-4-1']

  // 0 = A, 25 = Z, 26 = AA
  function columnName (i) {
    const letter = String.fromCharCode(65 + i % 26)
    return i < 26 ? letter : columnName(Math.floor(i / 26) - 1) + letter
  }

  function buildMonth (year, month) {
    const first = new Date(year, month, 1)
    const days = new Date(year, month + 1, 0).getDate()
    let html = `<caption>${monthNames[first.getMonth()]} ${first.getFullYear() % 100}</caption><thead><tr>`
    for (const d of 'SMTWTFS') {
      html += `<th>${d}</th>`
    }
    html += '</tr></thead><tbody>'
    for (let week = 0; week < 6; week++) {
      html += '<tr>'
      for (let d = 0; d < 7; d++) {
        const day = week * 7 + d - first.getDay() + 1
        const key = `${first.getFullYear()}-${first.getMonth() + 1}-${day}`
        const text = day > 0 && day <= days ? day : ''
        html += `<td${booked.includes(key) ? ' class="booked"' : ''}>${text}</td>`
      }
      html += '</tr>'
    }
    return `<table class="month">${html}</tbody></table>`
  }

  let months = ''
  for (let i = 0; i < 12; i++) {
    months += buildMonth(2019, 9 + i)
  }
  document.querySelector('#months').innerHTML = months

  // E to AJ, a narrow column after every seven
  let columns = ''
  let col = 4
  for (let group = 0; group < 4; group++) {
    columns += '<div class="month-group">'
    for (let i = 0; i < 7; i++) {
      columns += `<span class="col">${columnName(col++)}</span>`
    }
    columns += `</div><span class="col col-gap">${columnName(col++)}</span>`
  }
  document.querySelector('#month-columns').innerHTML = columns

  let rows = ''
  for (let start = 5; start < 32; start += 9) {
    rows += '<div class="row-block">'
    for (let row = start; row < start + 9; row++) {
      rows += `<span${row === 21 || row === 22 ? ' class="active"' : ''}>${row}</span>`
    }
    rows += '</div>'
  }
  document.querySelector('#row-headers').insertAdjacentHTML('beforeend', rows)
})()
```
